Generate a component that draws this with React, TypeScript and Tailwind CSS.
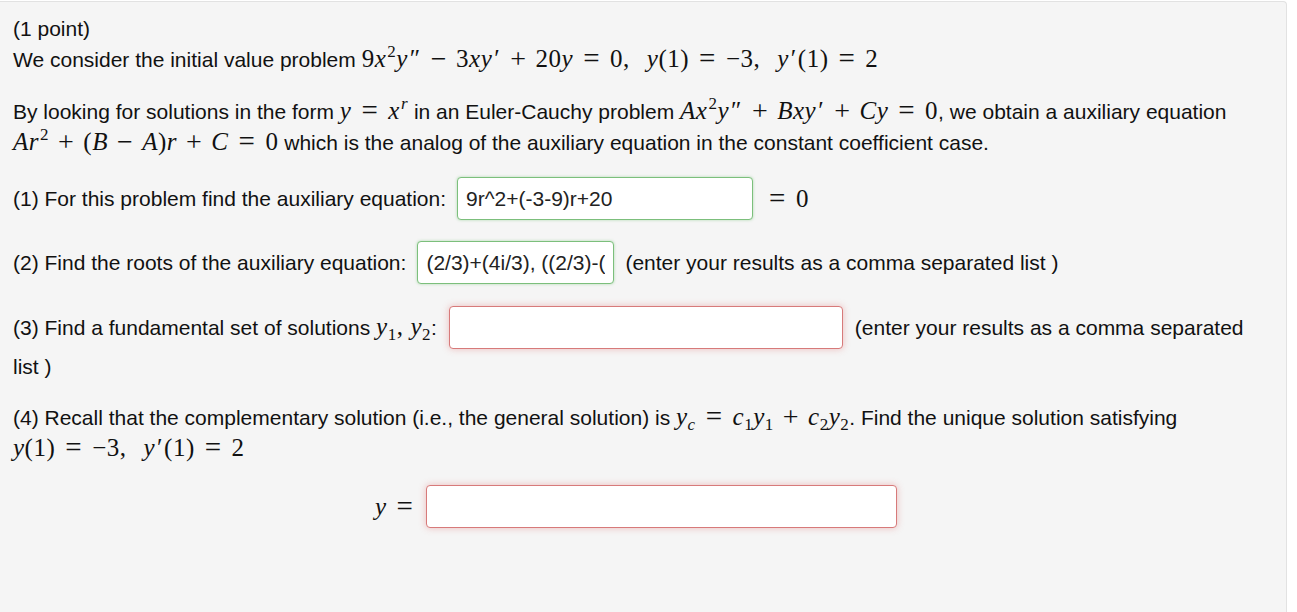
import React from 'react';

const serif = "font-['Liberation_Serif','DejaVu_Serif',serif]";

function M({ children }: { children: React.ReactNode }) {
  return (
    <span className={`${serif} text-[25px] leading-none tracking-[0.5px] whitespace-nowrap`}>{children}</span>
  );
}

function V({ children }: { children: React.ReactNode }) {
  return <i className="italic">{children}</i>;
}

// binary operator (+, −) with medium math spacing
function Op({ children }: { children: React.ReactNode }) {
  return <span className="mx-[9px] text-[28px] leading-[0] align-[-1px]">{children}</span>;
}

// relation (=) with thick math spacing
function Rel({ children }: { children: React.ReactNode }) {
  return <span className="mx-[10px] text-[29px] leading-[0] align-[-1px]">{children}</span>;
}

function Sup({ children }: { children: React.ReactNode }) {
  return <span className="text-[17px] leading-[0] align-[10px] ml-[1px]">{children}</span>;
}

function Sub({ children }: { children: React.ReactNode }) {
  return <span className="text-[17px] leading-[0] not-italic align-[-5px]">{children}</span>;
}

function Prime({ children }: { children: React.ReactNode }) {
  return <span className="ml-[2px] mr-[1px]">{children}</span>;
}

function Comma() {
  return <span className="mr-[17px]">,</span>;
}

function Answer({ value, state, width }: { value: string; state: 'ok' | 'bad'; width: string }) {
  const look =
    state === 'ok'
      ? 'border-[#7cbf7c] shadow-[0_0_3px_rgba(92,184,92,0.45)]'
      : 'border-[#d77a7a] shadow-[0_0_7px_rgba(220,80,80,0.35)]';
  return (
    <input
      readOnly
      value={value}
      className={`${width} h-[43px] shrink-0 rounded-[4px] border bg-white px-[8px] text-[21px] text-[#222] outline-none font-['Liberation_Sans',Arial,sans-serif] ${look}`}
    />
  );
}

export default function App() {
  return (
    <div className="min-h-screen bg-white">
      <div className="w-[1287px] min-h-[612px] mt-[1px] bg-[#f5f5f5] border-t border-r border-[#e2e2e2] rounded-tr-[4px] pl-[13px] pr-[10px] pt-[11px] text-[21px] leading-[31px] text-[#111] font-['Liberation_Sans',Arial,sans-serif]">
        <div>
          (1 point)
          <br />
          We consider the initial value problem{' '}
          <M>
            9<V>x</V>
            <Sup>2</Sup>
            <V>y</V>
            <Prime>″</Prime>
            <Op>−</Op>3<V>xy</V>
            <Prime>′</Prime>
            <Op>+</Op>20<V>y</V>
            <Rel>=</Rel>0<Comma />
            <V>y</V>(1)<Rel>=</Rel>−3<Comma />
            <V>y</V>
            <Prime>′</Prime>(1)<Rel>=</Rel>2
          </M>
        </div>

        <div className="mt-[21px]">
          By looking for solutions in the form{' '}
          <M>
            <V>y</V>
            <Rel>=</Rel>
            <V>x</V>
            <Sup>
              <V>r</V>
            </Sup>
          </M>{' '}
          in an Euler-Cauchy problem{' '}
          <M>
            <V>Ax</V>
            <Sup>2</Sup>
            <V>y</V>
            <Prime>″</Prime>
            <Op>+</Op>
            <V>Bxy</V>
            <Prime>′</Prime>
            <Op>+</Op>
            <V>Cy</V>
            <Rel>=</Rel>0
          </M>
          , we obtain a auxiliary equation
          <br />
          <M>
            <V>Ar</V>
            <Sup>2</Sup>
            <Op>+</Op>(<V>B</V>
            <Op>−</Op>
            <V>A</V>)<V>r</V>
            <Op>+</Op>
            <V>C</V>
            <Rel>=</Rel>0
          </M>{' '}
          which is the analog of the auxiliary equation in the constant coefficient case.
        </div>

        <div className="mt-[19px] flex items-center gap-[11px] h-[43px]">
          <span>(1) For this problem find the auxiliary equation:</span>
          <Answer value="9r^2+(-3-9)r+20" state="ok" width="w-[296px]" />
          <M>
            <span className="-ml-[5px]" />
            <Rel>=</Rel>0
          </M>
        </div>

        <div className="mt-[21px] flex items-center gap-[11px] h-[43px]">
          <span>(2) Find the roots of the auxiliary equation:</span>
          <Answer value="(2/3)+(4i/3), ((2/3)-(4i/3))" state="ok" width="w-[197px]" />
          <span>(enter your results as a comma separated list )</span>
        </div>

        <div className="mt-[22px] flex items-center gap-[12px] h-[43px]">
          <span>
            (3) Find a fundamental set of solutions{' '}
            <M>
              <V>y</V>
              <Sub>1</Sub>
              <span className="mr-[7px]">,</span>
              <V>y</V>
              <Sub>2</Sub>
            </M>
            :
          </span>
          <Answer value="" state="bad" width="w-[394px]" />
          <span>(enter your results as a comma separated</span>
        </div>
        <div className="mt-[2px]">list )</div>

        <div className="mt-[20px]">
          (4) Recall that the complementary solution (i.e., the general solution) is{' '}
          <M>
            <V>y</V>
            <Sub>
              <V>c</V>
            </Sub>
            <Rel>=</Rel>
            <V>c</V>
            <Sub>1</Sub>
            <V>y</V>
            <Sub>1</Sub>
            <Op>+</Op>
            <V>c</V>
            <Sub>2</Sub>
            <V>y</V>
            <Sub>2</Sub>
          </M>
          . Find the unique solution satisfying
          <br />
          <M>
            <V>y</V>(1)<Rel>=</Rel>−3<Comma />
            <V>y</V>
            <Prime>′</Prime>(1)<Rel>=</Rel>2
          </M>
        </div>

        <div className="mt-[21px] flex items-center gap-[3px] h-[43px] pl-[362px]">
          <M>
            <V>y</V>
            <Rel>=</Rel>
          </M>
          <Answer value="" state="bad" width="w-[471px]" />
        </div>
      </div>
    </div>
  );
}
